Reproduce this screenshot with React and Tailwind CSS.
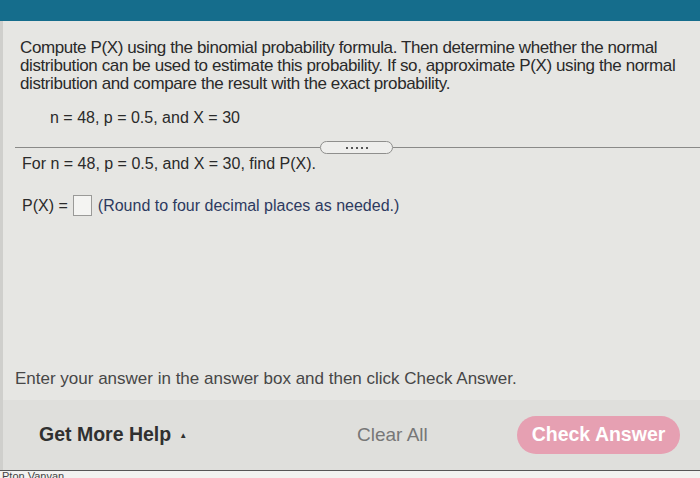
export default function App() {
  return (
    <div className="w-[700px] h-[478px] overflow-hidden bg-[#e6e6e3] flex flex-col text-[#2a2a2a]" style={{ fontFamily: '"Liberation Sans", Arial, sans-serif' }}>
      {/* barra superior */}
      <div className="h-[21px] shrink-0 bg-[#156d8c]" />

      <div className="flex-1 flex flex-col border-l-[3px] border-[#cfcfcc]">
        {/* enunciado */}
        <div className="h-[379px] flex flex-col">
          <p className="ml-[17px] w-[672px] pt-[18px] text-[17px] leading-[18px] tracking-[-0.4px]">
            Compute P(X) using the binomial probability formula. Then determine whether the normal distribution can be used to estimate this probability. If so, approximate P(X) using the normal distribution and compare the result with the exact probability.
          </p>
          <p className="pl-[47px] mt-[16px] text-[16px] leading-[18px]">n = 48, p = 0.5, and X = 30</p>

          {/* divisor */}
          <div className="flex items-center mt-[14px] pl-[12px] h-[13px]">
            <div className="flex-1 h-px bg-[#8a8a88]" />
            <div className="w-[73px] h-[13px] rounded-full border border-[#8f8f8d] bg-[#eeeeec] flex items-center justify-center gap-[3px]">
              {[0, 1, 2, 3, 4].map((i) => (
                <span key={i} className="w-[2px] h-[2px] bg-[#555]" />
              ))}
            </div>
            <div className="w-[307px] h-px bg-[#8a8a88]" />
          </div>

          <p className="pl-[19px] mt-px text-[16px] leading-[18px]">For n = 48, p = 0.5, and X = 30, find P(X).</p>

          <div className="flex items-center pl-[19px] mt-[22px] h-[21px] text-[16px]">
            <span>P(X) =</span>
            <span className="ml-[5px] w-[19px] h-[21px] border border-[#9a9a98] bg-[#f4f4f2]" />
            <span className="ml-[6px] text-[#2d3a60]">(Round to four decimal places as needed.)</span>
          </div>

          <p className="pl-[12px] mt-auto mb-[12px] text-[17px] leading-[18px] text-[#474747]">
            Enter your answer in the answer box and then click Check Answer.
          </p>
        </div>

        {/* rodapé */}
        <div className="h-[70px] bg-[#dfdfdc] flex items-center pl-[36px]">
          <div className="w-[318px] flex items-center">
            <button className="flex items-center gap-[8px] text-[19.5px] font-bold text-[#303030]">
              Get More Help
              <span className="text-[8px] mt-[2px]">▲</span>
            </button>
          </div>
          <div className="w-[160px]">
            <button className="text-[19px] text-[#777]">Clear All</button>
          </div>
          <button className="w-[163px] h-[38px] rounded-full bg-[#e6a0b2] text-white text-[19.5px] font-bold">
            Check Answer
          </button>
        </div>
      </div>

      {/* faixa inferior cortada */}
      <div className="h-[8px] shrink-0 border-t border-[#555] bg-[#f2f2f0] overflow-hidden">
        <p className="text-[11px] leading-[11px] pl-[2px] text-[#444]">Pton Vanvan</p>
      </div>
    </div>
  )
}
